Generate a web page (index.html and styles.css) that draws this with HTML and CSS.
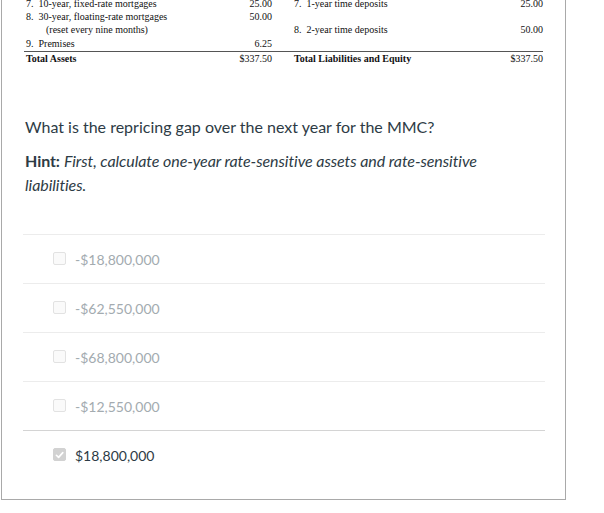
FILE: index.html
```html
<!DOCTYPE html>
<html>
<head>
<meta charset="utf-8">
<link rel="stylesheet" href="styles.css">
</head>
<body>
<div class="card">
  <div class="sheet">
    <div class="row r1">
      <span class="lbl">7.&nbsp; 10-year, fixed-rate mortgages</span><span class="num">25.00</span><span></span>
      <span class="lbl">7.&nbsp; 1-year time deposits</span><span class="num">25.00</span>
    </div>
    <div class="row r2">
      <span class="lbl">8.&nbsp; 30-year, floating-rate mortgages</span><span class="num">50.00</span><span></span>
      <span class="lbl"></span><span class="num"></span>
    </div>
    <div class="row r3">
      <span class="lbl indent">(reset every nine months)</span><span class="num"></span><span></span>
      <span class="lbl">8.&nbsp; 2-year time deposits</span><span class="num">50.00</span>
    </div>
    <div class="row r4">
      <span class="lbl">9.&nbsp; Premises</span><span class="num">6.25</span><span></span>
      <span class="lbl"></span><span class="num"></span>
    </div>
    <div class="row total">
      <span class="lbl"><b>Total Assets</b></span><span class="num">$337.50</span><span></span>
      <span class="lbl"><b>Total Liabilities and Equity</b></span><span class="num">$337.50</span>
    </div>
  </div>

  <p class="question">What is the repricing gap over the next year for the MMC?</p>
  <p class="hint"><b>Hint:</b> <i>First, calculate one-year rate-sensitive assets and rate-sensitive liabilities.</i></p>

  <div class="answers">
    <div class="answer"><span class="box"></span><span class="txt">-$18,800,000</span></div>
    <div class="answer"><span class="box"></span><span class="txt">-$62,550,000</span></div>
    <div class="answer"><span class="box"></span><span class="txt">-$68,800,000</span></div>
    <div class="answer"><span class="box"></span><span class="txt">-$12,550,000</span></div>
    <div class="answer selected"><span class="box checked"><svg width="12" height="12" viewBox="0 0 12 12"><path d="M2.6 6.3 L5 8.6 L9.6 3.4" fill="none" stroke="#fff" stroke-width="1.8" stroke-linecap="round" stroke-linejoin="round"/></svg></span><span class="txt">$18,800,000</span></div>
  </div>
</div>
</body>
</html>
```

FILE: styles.css
```css
html, body {
  margin: 0;
  padding: 0;
  background: #fff;
}
.card {
  width: 563px;
  margin-left: 1px;
  margin-top: -10px;
  border: 1px solid #a9a9a9;
  border-top-color: #fff;
  padding-top: 7px;
  font-family: Lato, "Liberation Sans", sans-serif;
  color: #2d3b45;
}
.sheet {
  margin-left: 22px;
  width: 519px;
  font-family: "Liberation Serif", serif;
  font-size: 10px;
  color: #111;
}
.row {
  display: grid;
  grid-template-columns: 208px 40px 20px 211px 40px;
  white-space: nowrap;
}
.r1 { height: 12px; line-height: 12px; }
.r2 { height: 13px; line-height: 13px; }
.r3 { height: 14px; line-height: 14px; }
.r4 { height: 14px; line-height: 14px; }
.total {
  height: 14px;
  line-height: 13px;
  border-top: 1px solid #555;
}
.lbl { padding-left: 2px; }
.indent { padding-left: 22px; }
.num { text-align: right; }
.question {
  margin: 49px 0 0 23px;
  font-size: 16px;
  line-height: 24px;
}
.hint {
  margin: 10px 60px 0 23px;
  font-size: 16px;
  line-height: 24px;
  letter-spacing: -0.07px;
}
.answers {
  margin: 37px 20px 0 21px;
  padding-bottom: 20px;
}
.answer {
  display: flex;
  align-items: center;
  height: 48px;
  border-top: 1px solid #ececec;
  padding-left: 30px;
}
.answer.selected {
  border-top-color: #d4d4d4;
}
.box {
  width: 11px;
  height: 11px;
  border: 1px solid #e2e2e2;
  border-radius: 2px;
  background: #fafafa;
  margin-right: 9px;
  margin-top: -1px;
  display: flex;
  align-items: center;
  justify-content: center;
}
.box.checked {
  background: #d2d2d2;
  border-color: #d2d2d2;
}
.txt {
  font-size: 14px;
  color: #a3abb0;
}
.selected .txt {
  color: #2d3b45;
}
```
